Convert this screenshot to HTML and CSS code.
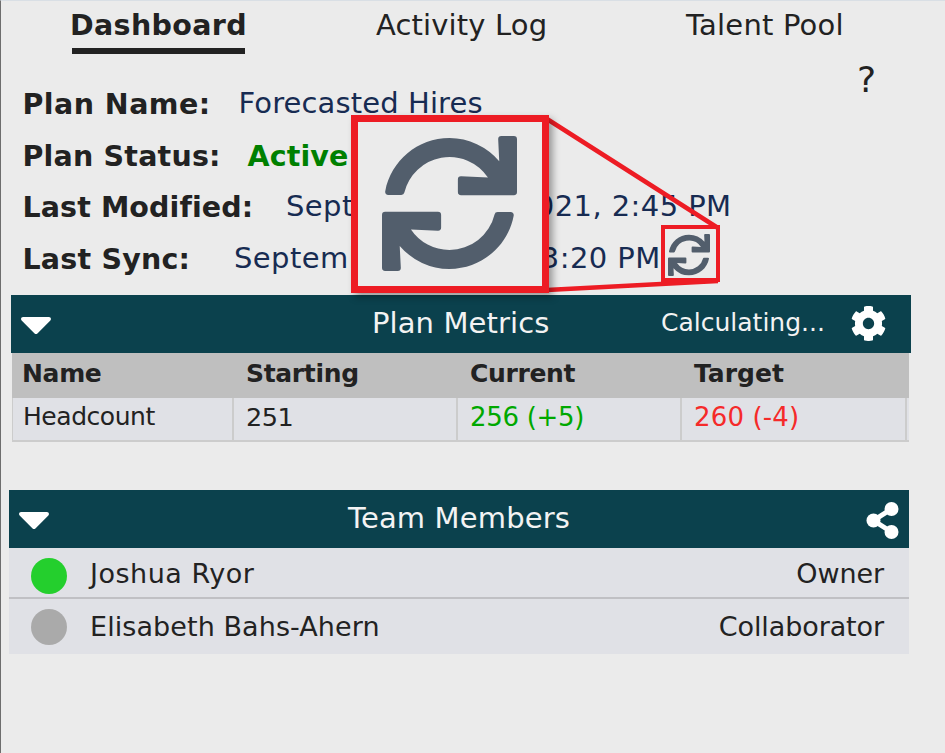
FILE: index.html
```html
<!DOCTYPE html>
<html lang="en">
<head>
<meta charset="utf-8">
<title>Dashboard</title>
<link rel="stylesheet" href="styles.css">
</head>
<body>
<svg class="sprite" aria-hidden="true">
  <symbol id="sync" viewBox="0 0 512 512"><path d="M440.65 12.57l4 82.77A247.16 247.16 0 0 0 255.83 8C134.73 8 33.91 94.92 12.29 209.82A12 12 0 0 0 24.09 224h49.05a12 12 0 0 0 11.67-9.26 175.91 175.91 0 0 1 317-56.94l-101.46-4.86a12 12 0 0 0-12.57 12v47.41a12 12 0 0 0 12 12H500a12 12 0 0 0 12-12V12a12 12 0 0 0-12-12h-47.37a12 12 0 0 0-11.98 12.57zM255.83 432a175.61 175.61 0 0 1-146-77.8l101.8 4.87a12 12 0 0 0 12.57-12v-47.4a12 12 0 0 0-12-12H12a12 12 0 0 0-12 12V500a12 12 0 0 0 12 12h47.35a12 12 0 0 0 12-12.6l-4.15-82.57A247.17 247.17 0 0 0 255.83 504c121.11 0 221.93-86.92 243.55-201.82a12 12 0 0 0-11.8-14.18h-49.05a12 12 0 0 0-11.67 9.26A175.86 175.86 0 0 1 255.83 432z"/></symbol>
  <symbol id="caret" viewBox="11 192 298 169"><path d="M31.3 192h257.3c17.8 0 26.7 21.5 14.1 34.1L174.1 354.8c-7.8 7.8-20.5 7.8-28.3 0L17.2 226.1C4.6 213.5 13.5 192 31.3 192z"/></symbol>
</svg>
<div class="page">
  <nav class="tabs">
    <a class="tab tab-active">Dashboard</a>
    <a class="tab tab-log">Activity Log</a>
    <a class="tab tab-pool">Talent Pool</a>
  </nav>
  <div class="help"><span>?</span></div>
  <dl class="details">
    <div class="detail"><dt class="key-name">Plan Name:</dt><dd>Forecasted Hires</dd></div>
    <div class="detail"><dt class="key-status">Plan Status:</dt><dd class="active">Active</dd></div>
    <div class="detail"><dt class="key-modified">Last Modified:</dt><dd class="date">September 21, 2021, 2:45 PM</dd></div>
    <div class="detail"><dt class="key-sync">Last Sync:</dt><dd class="date date-sync">September 9, 2021, 3:20 PM</dd><svg class="sync-small"><use href="#sync"/></svg></div>
    <svg class="callout-lines" viewBox="0 0 180 185"><path d="M4 5L175 114M4 176L175 167"/></svg>
    <div class="callout-box"><svg class="sync-large"><use href="#sync"/></svg></div>
    <div class="callout-target"></div>
  </dl>
  <section class="panel metrics">
    <header class="bar">
      <svg class="caret"><use href="#caret"/></svg>
      <h2 class="title-metrics">Plan Metrics</h2>
      <span class="calc">Calculating...</span>
      <svg class="cog" viewBox="8 8 496 496"><path d="M487.4 315.7l-42.6-24.6c4.3-23.2 4.3-47 0-70.2l42.6-24.6c4.9-2.8 7.1-8.6 5.5-14-11.1-35.6-30-67.8-54.7-94.6-3.8-4.1-10-5.1-14.8-2.3L380.8 110c-17.9-15.4-38.5-27.3-60.8-35.1V25.8c0-5.6-3.9-10.5-9.4-11.7-36.7-8.2-74.3-7.8-109.2 0-5.5 1.2-9.4 6.1-9.4 11.7V75c-22.2 7.9-42.8 19.8-60.8 35.1L88.7 85.5c-4.9-2.8-11-1.9-14.8 2.3-24.7 26.7-43.6 58.9-54.7 94.6-1.7 5.4.6 11.2 5.5 14L67.3 221c-4.3 23.2-4.3 47 0 70.2l-42.6 24.6c-4.9 2.8-7.1 8.6-5.5 14 11.1 35.6 30 67.8 54.7 94.6 3.8 4.1 10 5.1 14.8 2.3l42.6-24.6c17.9 15.4 38.5 27.3 60.8 35.1v49.2c0 5.6 3.9 10.5 9.4 11.7 36.7 8.2 74.3 7.8 109.2 0 5.5-1.2 9.4-6.1 9.4-11.7v-49.2c22.2-7.9 42.8-19.8 60.8-35.1l42.6 24.6c4.9 2.8 11 1.9 14.8-2.3 24.7-26.7 43.6-58.9 54.7-94.6 1.5-5.5-.7-11.3-5.6-14.1zM256 336c-44.1 0-80-35.9-80-80s35.9-80 80-80 80 35.9 80 80-35.9 80-80 80z"/></svg>
    </header>
    <div class="grid grid-head">
      <div>Name</div><div>Starting</div><div>Current</div><div class="target">Target</div>
    </div>
    <div class="grid grid-row">
      <div class="metric">Headcount</div><div class="start">251</div><div class="up">256 (+5)</div><div class="down">260 (-4)</div>
    </div>
  </section>
  <section class="panel team">
    <header class="bar">
      <svg class="caret"><use href="#caret"/></svg>
      <h2 class="title-team">Team Members</h2>
      <svg class="share" viewBox="0 0 32 37"><path d="M25 7L7 18.5L25 30"/><circle cx="7" cy="18.5" r="7"/><circle cx="25" cy="7" r="7"/><circle cx="25" cy="30" r="7"/></svg>
    </header>
    <div class="member"><i class="dot online"></i><span class="person lead">Joshua Ryor</span><span class="role">Owner</span></div>
    <div class="member second"><i class="dot"></i><span class="person">Elisabeth Bahs-Ahern</span><span class="role">Collaborator</span></div>
  </section>
</div>
</body>
</html>
```
FILE: styles.css
```css
* { box-sizing: border-box; }
body { margin: 0; background: #ebebeb; color: #222; font-family: "DejaVu Sans", Verdana, sans-serif; font-size: 29px; }
.sprite { position: absolute; width: 0; height: 0; }
.page { height: 753px; border-left: 1px solid #6d6d6d; border-top: 1px solid #d9dfe5; overflow: hidden; white-space: nowrap; }
.tabs { display: flex; height: 53px; padding-left: 71px; line-height: 49px; letter-spacing: .15px; }
.tab-active { width: 173px; height: 53px; margin-right: 131px; border-bottom: 6px solid #222; font-weight: bold; font-size: 28.5px; line-height: 50px; letter-spacing: .35px; text-indent: -2px; }
.tab-log { width: 170px; }
.tab-pool { margin-left: 140px; letter-spacing: .2px; }
.help { height: 24px; padding-left: 856px; line-height: 52px; font-size: 36px; }
.details { position: relative; margin: 0; height: 217px; padding-left: 21.5px; }
.detail { display: flex; height: 51.67px; line-height: 51.67px; }
dt { font-weight: bold; font-size: 28.5px; letter-spacing: .2px; line-height: 53.67px; }
dd { margin: 0; color: #172b52; letter-spacing: .12px; }
.active { color: #008000; font-weight: bold; font-size: 28.5px; line-height: 53.67px; }
.date { letter-spacing: .43px; }
.key-name { width: 216px; letter-spacing: .45px; }
.key-status { width: 225px; }
.key-modified { width: 263.5px; letter-spacing: .1px; }
.key-sync { width: 211.5px; }
.date-sync { width: 434px; }
svg { display: block; fill: #fff; }
.sync-small { width: 42px; height: 42px; margin-top: 1px; fill: #525e6c; }
.callout-lines { position: absolute; left: 542px; top: 36px; width: 180px; height: 185px; fill: none; stroke: #ed1c24; stroke-width: 4.5; }
.callout-box { position: absolute; left: 350px; top: 37px; width: 198px; height: 178px; padding: 14px 24px; border: 7px solid #ed1c24; background: #ebebeb; box-shadow: 4px 4px 7px rgba(0,0,0,.35); z-index: 2; }
.sync-large { width: 135px; height: 135px; fill: #525e6c; }
.callout-target { position: absolute; left: 660px; top: 147px; width: 59px; height: 57px; border: 4px solid #ed1c24; }
.panel { width: 900px; }
.metrics { margin-left: 10px; height: 195px; }
.team { margin-left: 8px; }
.bar { display: flex; height: 58px; background: #0b414d; color: #f3f3f3; line-height: 56px; padding-left: 10px; }
.caret { width: 30px; height: 17px; margin-top: 22px; }
h2 { margin: 0; font-size: 29px; font-weight: normal; letter-spacing: .15px; }
.title-metrics { margin-left: 321px; width: 289px; letter-spacing: .1px; }
.title-team { margin-left: 299px; width: 517.5px; }
.calc { width: 190px; font-size: 25px; line-height: 55px; }
.cog { width: 35px; height: 35px; margin-top: 11px; }
.share { width: 33px; height: 37px; margin-top: 12px; }
.share path { fill: none; stroke: #fff; stroke-width: 5; }
.grid { display: grid; grid-template-columns: 222px 224px 224px 225px; margin-left: 1px; width: 897px; }
.grid > div { padding-left: 12px; }
.grid > div:first-child { padding-left: 10px; }
.grid-head { height: 45px; background: #bfbfbf; font-weight: bold; font-size: 25px; line-height: 41px; letter-spacing: -.33px; }
.grid-head .target { letter-spacing: 0; }
.grid-row { height: 44px; font-size: 26px; line-height: 39px; background: #e0e1e6; border-bottom: 2px solid #ccc; letter-spacing: -.3px; }
.grid-row > div { border-right: 2px solid #ccc; }
.grid-row .metric { padding-left: 9px; font-size: 25px; line-height: 38px; letter-spacing: -.45px; border-left: 1px solid #ccc; }
.grid-row .start { font-size: 25.5px; letter-spacing: -.5px; }
.up { color: #00a800; }
.down { color: #f52a2a; letter-spacing: .15px; }
.member { display: flex; height: 51px; line-height: 51px; border-bottom: 2px solid #c0c0c4; background: #e0e1e6; font-size: 27px; padding: 0 25px 0 22px; }
.second { height: 55px; border: 0; line-height: 55px; }
.dot { width: 36px; height: 36px; margin: 10px 23px 0 0; border-radius: 50%; background: #aaa; }
.online { background: #24cf2d; }
.person { letter-spacing: .08px; }
.lead { letter-spacing: .5px; }
.role { margin-left: auto; letter-spacing: -.1px; }
```
